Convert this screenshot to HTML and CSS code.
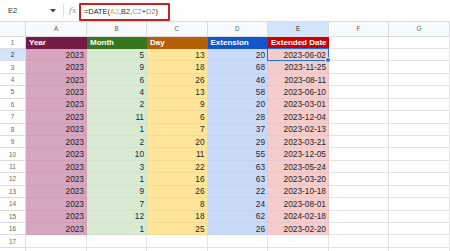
FILE: index.html
```html
<!doctype html>
<html lang="en">
 <head>
  <meta charset="UTF-8">
  <title>Extended Date</title>
  <link rel="stylesheet" href="styles.css">
 </head>
 <body>
  <div class="toolbar">
   <div class="name-box">E2</div>
   <svg class="caret" width="6" height="4" viewBox="0 0 6 4"><path d="M0 0h6L3 3.5z" fill="#444"/></svg>
   <div class="sep"></div>
   <div class="fx">fx</div>
   <div class="formula">=DATE(<span class="ref-a">A2</span>,<span class="ref-b">B2</span>,<span class="ref-c">C2</span>+<span class="ref-d">D2</span>)</div>
  </div>
  <div class="sheet">
   <div class="row head-row">
    <div class="corner"></div>
    <div class="col">A</div><div class="col">B</div><div class="col">C</div><div class="col">D</div>
    <div class="col active">E</div><div class="col">F</div><div class="col">G</div>
   </div>
   <div class="row">
    <div class="num">1</div>
    <div class="hd year">Year</div><div class="hd month">Month</div><div class="hd day">Day</div>
    <div class="hd ext">Extension</div><div class="hd date">Extended Date</div><div class="c"></div><div class="c"></div>
   </div>
   <div class="row">
    <div class="num active">2</div>
    <div class="c a">2023</div><div class="c b">5</div><div class="c d">13</div><div class="c e">20</div>
    <div class="c f selected">2023-06-02</div><div class="c"></div><div class="c"></div>
   </div>
   <div class="row"><div class="num">3</div><div class="c a">2023</div><div class="c b">9</div><div class="c d">18</div><div class="c e">68</div><div class="c f">2023-11-25</div><div class="c"></div><div class="c"></div></div>
   <div class="row"><div class="num">4</div><div class="c a">2023</div><div class="c b">6</div><div class="c d">26</div><div class="c e">46</div><div class="c f">2023-08-11</div><div class="c"></div><div class="c"></div></div>
   <div class="row"><div class="num">5</div><div class="c a">2023</div><div class="c b">4</div><div class="c d">13</div><div class="c e">58</div><div class="c f">2023-06-10</div><div class="c"></div><div class="c"></div></div>
   <div class="row"><div class="num">6</div><div class="c a">2023</div><div class="c b">2</div><div class="c d">9</div><div class="c e">20</div><div class="c f">2023-03-01</div><div class="c"></div><div class="c"></div></div>
   <div class="row"><div class="num">7</div><div class="c a">2023</div><div class="c b">11</div><div class="c d">6</div><div class="c e">28</div><div class="c f">2023-12-04</div><div class="c"></div><div class="c"></div></div>
   <div class="row"><div class="num">8</div><div class="c a">2023</div><div class="c b">1</div><div class="c d">7</div><div class="c e">37</div><div class="c f">2023-02-13</div><div class="c"></div><div class="c"></div></div>
   <div class="row"><div class="num">9</div><div class="c a">2023</div><div class="c b">2</div><div class="c d">20</div><div class="c e">29</div><div class="c f">2023-03-21</div><div class="c"></div><div class="c"></div></div>
   <div class="row"><div class="num">10</div><div class="c a">2023</div><div class="c b">10</div><div class="c d">11</div><div class="c e">55</div><div class="c f">2023-12-05</div><div class="c"></div><div class="c"></div></div>
   <div class="row"><div class="num">11</div><div class="c a">2023</div><div class="c b">3</div><div class="c d">22</div><div class="c e">63</div><div class="c f">2023-05-24</div><div class="c"></div><div class="c"></div></div>
   <div class="row"><div class="num">12</div><div class="c a">2023</div><div class="c b">1</div><div class="c d">16</div><div class="c e">63</div><div class="c f">2023-03-20</div><div class="c"></div><div class="c"></div></div>
   <div class="row"><div class="num">13</div><div class="c a">2023</div><div class="c b">9</div><div class="c d">26</div><div class="c e">22</div><div class="c f">2023-10-18</div><div class="c"></div><div class="c"></div></div>
   <div class="row"><div class="num">14</div><div class="c a">2023</div><div class="c b">7</div><div class="c d">8</div><div class="c e">24</div><div class="c f">2023-08-01</div><div class="c"></div><div class="c"></div></div>
   <div class="row"><div class="num">15</div><div class="c a">2023</div><div class="c b">12</div><div class="c d">18</div><div class="c e">62</div><div class="c f">2024-02-18</div><div class="c"></div><div class="c"></div></div>
   <div class="row"><div class="num">16</div><div class="c a">2023</div><div class="c b">1</div><div class="c d">25</div><div class="c e">26</div><div class="c f">2023-02-20</div><div class="c"></div><div class="c"></div></div>
   <div class="row"><div class="num">17</div><div class="c"></div><div class="c"></div><div class="c"></div><div class="c"></div><div class="c"></div><div class="c"></div><div class="c"></div></div>
   <div class="row"><div class="num"></div><div class="c"></div><div class="c"></div><div class="c"></div><div class="c"></div><div class="c"></div><div class="c"></div><div class="c"></div></div>
  </div>
 </body>
</html>
```

FILE: styles.css
```css
body {
    margin: 0;
    width: 450px;
    height: 251px;
    overflow: hidden;
    background: #fff;
    font-family: 'Liberation Sans', Arial, sans-serif;
    color: #222;
}

.toolbar {
    height: 21px;
    display: flex;
    align-items: center;
    border-bottom: 1px solid #dadce0;
    box-sizing: content-box;
}

.name-box {
    font-size: 7.5px;
    color: #333;
    margin-left: 8px;
    width: 42px;
}

.sep {
    width: 1px;
    height: 13px;
    background: #dadce0;
    margin: 0 5px 0 7px;
}

.fx {
    font-family: 'DejaVu Serif', serif;
    font-style: italic;
    font-size: 8px;
    color: #9aa0a6;
    width: 10px;
}

.formula {
    height: 18px;
    box-sizing: border-box;
    width: 91px;
    margin-top: 2px;
    border: 2px solid #c5221f;
    border-radius: 1px;
    padding-left: 3px;
    display: flex;
    align-items: center;
    font-size: 7.4px;
    color: #222;
    white-space: nowrap;
}

.ref-a { color: #e8a04a; }
.ref-b { color: #333; }
.ref-c { color: #4aa3c6; }
.ref-d { color: #7f7f9a; }

.row {
    display: grid;
    grid-template-columns: 26px 61px 60px 60.5px 60.5px 61px 60px 61px;
    height: 12.43px;
}

.head-row {
    height: 14.6px;
    background: #f8f9fa;
}

.corner,
.col,
.num {
    box-sizing: border-box;
    border-right: 1px solid #dadce0;
    border-bottom: 1px solid #dadce0;
    color: #5f6368;
    font-size: 6.3px;
    display: flex;
    align-items: center;
    justify-content: center;
}

.col.active,
.num.active {
    background: #d3e3fd;
    color: #1f1f1f;
}

.num {
    background: #fff;
}

.c,
.hd {
    box-sizing: border-box;
    border-right: 1px solid #e2e3e3;
    border-bottom: 1px solid #e2e3e3;
    font-size: 8.3px;
    display: flex;
    align-items: center;
    padding: 0 2px;
    white-space: nowrap;
    overflow: hidden;
    position: relative;
}

.c {
    justify-content: flex-end;
    color: #1f1f1f;
}

.hd {
    color: #fff;
    font-weight: bold;
    font-size: 8px;
    padding-left: 3px;
}

.year  { background: #741b47; border-color: #741b47; }
.month { background: #38761d; border-color: #38761d; }
.day   { background: #b45f06; border-color: #b45f06; }
.ext   { background: #1155cc; border-color: #1155cc; }
.date  { background: #cc0000; border-color: #cc0000; }

.c.a { background: #d5a6bd; border-color: #d09fb7; }
.c.b { background: #d9ead3; border-color: #d2e3cc; }
.c.d { background: #ffe599; border-color: #f5db8f; }
.c.e { background: #c9daf8; border-color: #c2d3f1; }
.c.f { background: #f4cccc; border-color: #edc5c5; }

.c.selected {
    overflow: visible;
}

.c.selected::before {
    content: "";
    position: absolute;
    left: -1px;
    top: -1px;
    right: -1px;
    bottom: -1px;
    border: 1.5px solid #1a73e8;
}

.c.selected::after {
    content: "";
    position: absolute;
    right: -3px;
    bottom: -3px;
    width: 4px;
    height: 4px;
    border-radius: 50%;
    background: #1a73e8;
    border: 0.5px solid #fff;
    z-index: 2;
}
```
